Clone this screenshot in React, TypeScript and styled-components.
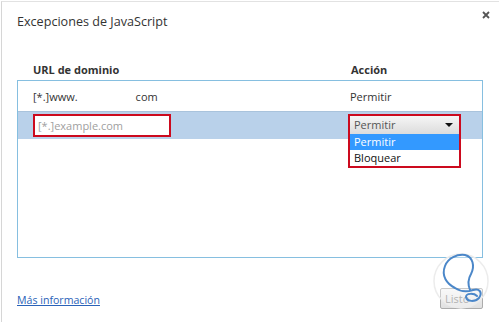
import styled, { createGlobalStyle } from "styled-components";

const GlobalStyle = createGlobalStyle`
  html, body {
    margin: 0;
    padding: 0;
    background: #ffffff;
  }
  body {
    font-family: "Open Sans", "Noto Sans", sans-serif;
    color: #333;
  }
`;

const rows = [{ url: "[*.]www.", tld: "com", action: "Permitir" }];

function CloseIcon() {
  return (
    <svg width="8" height="8" viewBox="0 0 8 8">
      <path d="M1 1 L7 7 M7 1 L1 7" stroke="#555" strokeWidth="1.8" />
    </svg>
  );
}

function Watermark() {
  return (
    <Mark width="58" height="62" viewBox="0 0 58 62">
      <circle cx="28" cy="31" r="27" fill="rgba(255,255,255,0.35)" stroke="#ececec" strokeWidth="1.5" />
      <path
        d="M22 38 C 14 34, 8 26, 12 16 C 15 8, 24 4, 32 5 C 40 7, 42 16, 38 24 C 35 29, 35 35, 37 40 M22 38 C 28 42, 34 42, 40 40 C 46 38, 50 42, 46 48 C 42 52, 34 52, 33 47 C 33 43, 41 43, 44 46"
        fill="none"
        stroke="#4b87c9"
        strokeWidth="2"
        strokeLinecap="round"
      />
    </Mark>
  );
}

function App() {
  return (
    <>
      <GlobalStyle />
      <Dialog>
        <TitleBar>
          <Title>Excepciones de JavaScript</Title>
          <Close>
            <CloseIcon />
          </Close>
        </TitleBar>
        <Body>
          <HeaderRow>
            <HeadCell>URL de dominio</HeadCell>
            <HeadCell>Acción</HeadCell>
          </HeaderRow>
          <Table>
            {rows.map((r) => (
              <Row key={r.url}>
                <Cell>
                  {r.url}
                  <Blank />
                  {r.tld}
                </Cell>
                <Cell>{r.action}</Cell>
              </Row>
            ))}
            <EditRow>
              <Cell>
                <UrlInput placeholder="[*.]example.com" />
              </Cell>
              <Cell>
                <DropBox>
                  <Select>
                    Permitir
                    <Arrow />
                  </Select>
                  <Option $active>Permitir</Option>
                  <Option>Bloquear</Option>
                </DropBox>
              </Cell>
            </EditRow>
          </Table>
        </Body>
        <Footer>
          <MoreLink href="#">Más información</MoreLink>
          <DoneButton>Listo</DoneButton>
        </Footer>
        <Watermark />
      </Dialog>
    </>
  );
}

export default App;

const Dialog = styled.div`
  position: relative;
  box-sizing: border-box;
  width: 498px;
  height: 321px;
  margin: 1px 0 0 1px;
  border-left: 1px solid #d6d6d6;
  border-top: 1px solid #e2e2e2;
  padding: 0 17px 0 15px;
  display: flex;
  flex-direction: column;
  background: #fff;
`;

const TitleBar = styled.div`
  display: flex;
  justify-content: space-between;
  height: 40px;
`;

const Title = styled.h1`
  margin: 10px 0 0;
  font-size: 12.6px;
  line-height: 20px;
  font-weight: 400;
  color: #333;
`;

const Close = styled.div`
  margin: 9px -8px 0 0;
  width: 8px;
  height: 8px;
  display: flex;
`;

const Body = styled.div`
  margin-top: 20px;
`;

const HeaderRow = styled.div`
  display: grid;
  grid-template-columns: 318px 1fr;
  height: 16px;
  margin-bottom: 2px;
`;

const HeadCell = styled.div`
  padding-left: 16px;
  font-size: 11px;
  line-height: 16px;
  font-weight: 700;
  color: #333;
`;

const Table = styled.div`
  box-sizing: border-box;
  width: 466px;
  height: 178px;
  border: 1px solid #86bfe0;
`;

const Row = styled.div`
  display: grid;
  grid-template-columns: 317px 1fr;
  height: 30px;
  align-items: center;
`;

const EditRow = styled(Row)`
  height: 28px;
  background: #b9d1ea;
  border-top: 1px solid #a9c3dc;
  box-sizing: border-box;
`;

const Cell = styled.div`
  position: relative;
  padding-left: 15px;
  font-size: 11px;
  color: #333;
  display: flex;
  align-items: center;
  height: 100%;
`;

const Blank = styled.span`
  display: inline-block;
  width: 58px;
`;

const UrlInput = styled.input`
  box-sizing: border-box;
  width: 138px;
  height: 23px;
  border: 2px solid #cc0a1e;
  padding: 0 3px;
  font-family: inherit;
  font-size: 11px;
  background: #fff;
  outline: none;
  &::placeholder {
    color: #a0a0a0;
  }
`;

const DropBox = styled.div`
  position: absolute;
  left: 13px;
  top: 2px;
  box-sizing: border-box;
  width: 113px;
  border: 2px solid #cc0a1e;
  background: #fff;
  z-index: 2;
`;

const Select = styled.div`
  position: relative;
  height: 18px;
  padding-left: 4px;
  font-size: 11px;
  line-height: 18px;
  color: #555;
  background: linear-gradient(#f6f6f6, #dcdcdc);
`;

const Arrow = styled.span`
  position: absolute;
  right: 6px;
  top: 7px;
  border-left: 4px solid transparent;
  border-right: 4px solid transparent;
  border-top: 4px solid #111;
`;

const Option = styled.div<{ $active?: boolean }>`
  height: 16px;
  padding-left: 4px;
  font-size: 11px;
  line-height: 16px;
  color: ${(p) => (p.$active ? "#fff" : "#111")};
  background: ${(p) => (p.$active ? "#3399ff" : "#fff")};
`;

const Footer = styled.div`
  display: flex;
  justify-content: space-between;
  align-items: center;
  margin-top: 30px;
  height: 21px;
  width: 466px;
`;

const MoreLink = styled.a`
  font-size: 10.6px;
  color: #2a62b8;
  text-decoration: underline;
  margin-top: 2px;
`;

const DoneButton = styled.button`
  box-sizing: border-box;
  width: 43px;
  height: 21px;
  border: 1px solid #acacac;
  border-radius: 2px;
  background: linear-gradient(#f5f5f5, #e0e0e0);
  font-family: inherit;
  font-size: 11px;
  color: #888;
  padding: 0 0 0 4px;
  text-align: left;
`;

const Mark = styled.svg`
  position: absolute;
  left: 431px;
  top: 248px;
`;
